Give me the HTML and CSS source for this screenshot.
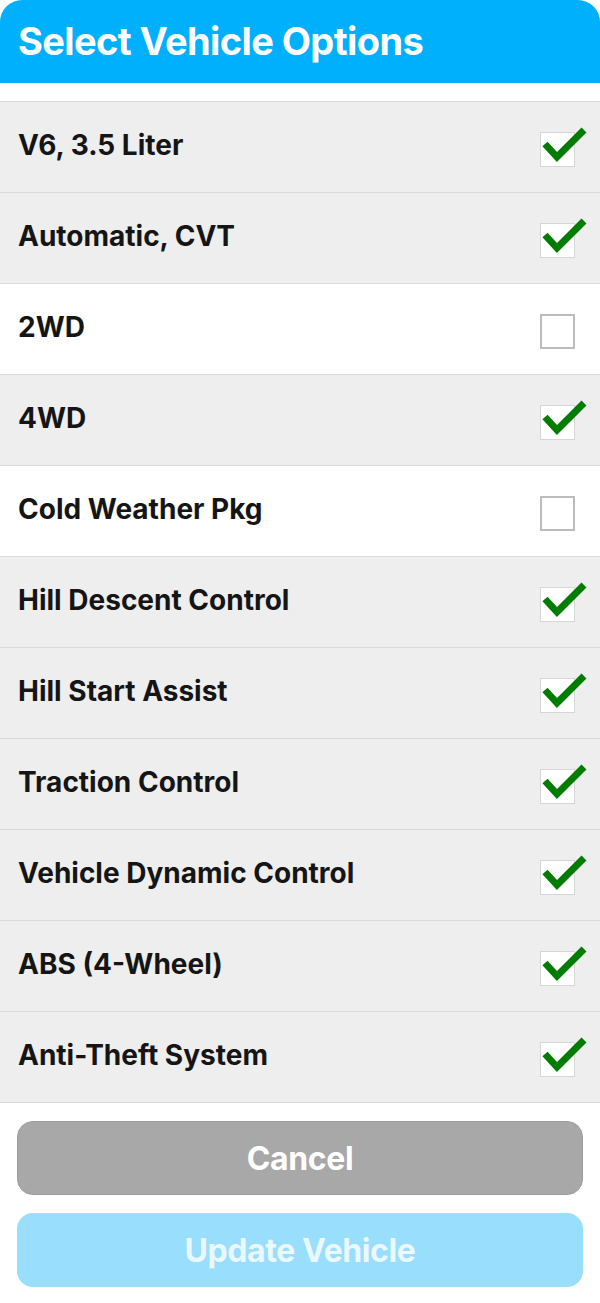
FILE: index.html
```html
<!DOCTYPE html>
<html lang="en">
<head>
    <meta charset="UTF-8">
    <meta name="viewport" content="width=device-width, initial-scale=1.0">
    <title>Select Vehicle Options</title>
    <link rel="stylesheet" href="styles.css">
</head>
<body>
    <div class="sheet">
        <div class="sheet-title">Select Vehicle Options</div>
        <div class="options">
            <div class="option checked"><span>V6, 3.5 Liter</span><div class="box"><svg class="tick" viewBox="0 0 46 34"><polyline points="3,17 15,30 42,3"/></svg></div></div>
            <div class="option checked"><span>Automatic, CVT</span><div class="box"><svg class="tick" viewBox="0 0 46 34"><polyline points="3,17 15,30 42,3"/></svg></div></div>
            <div class="option"><span>2WD</span><div class="box empty"></div></div>
            <div class="option checked"><span>4WD</span><div class="box"><svg class="tick" viewBox="0 0 46 34"><polyline points="3,17 15,30 42,3"/></svg></div></div>
            <div class="option"><span>Cold Weather Pkg</span><div class="box empty"></div></div>
            <div class="option checked"><span>Hill Descent Control</span><div class="box"><svg class="tick" viewBox="0 0 46 34"><polyline points="3,17 15,30 42,3"/></svg></div></div>
            <div class="option checked"><span>Hill Start Assist</span><div class="box"><svg class="tick" viewBox="0 0 46 34"><polyline points="3,17 15,30 42,3"/></svg></div></div>
            <div class="option checked"><span>Traction Control</span><div class="box"><svg class="tick" viewBox="0 0 46 34"><polyline points="3,17 15,30 42,3"/></svg></div></div>
            <div class="option checked"><span>Vehicle Dynamic Control</span><div class="box"><svg class="tick" viewBox="0 0 46 34"><polyline points="3,17 15,30 42,3"/></svg></div></div>
            <div class="option checked"><span>ABS (4-Wheel)</span><div class="box"><svg class="tick" viewBox="0 0 46 34"><polyline points="3,17 15,30 42,3"/></svg></div></div>
            <div class="option checked"><span>Anti-Theft System</span><div class="box"><svg class="tick" viewBox="0 0 46 34"><polyline points="3,17 15,30 42,3"/></svg></div></div>
        </div>
        <div class="actions">
            <button class="btn btn-cancel">Cancel</button>
            <button class="btn btn-update" disabled>Update Vehicle</button>
        </div>
    </div>
</body>
</html>
```

FILE: styles.css
```css
body {
    font-family: "Inter", "Liberation Sans", sans-serif;
    background-color: #fff;
    margin: 0;
    padding: 0;
}
.sheet {
    width: 600px;
    background-color: #fff;
}
.sheet-title {
    height: 83px;
    background-color: #00b0fd;
    color: #fff;
    font-size: 38px;
    font-weight: 700;
    letter-spacing: -0.6px;
    padding-left: 18px;
    display: flex;
    align-items: center;
    padding-bottom: 2px;
    box-sizing: border-box;
    border-radius: 22px 22px 0 0;
}
.options {
    margin-top: 18px;
    border-top: 1px solid #dadada;
}
.option {
    height: 90px;
    border-bottom: 1px solid #dadada;
    background-color: #fff;
    display: flex;
    align-items: center;
    justify-content: space-between;
    padding: 0 25px 0 18px;
    font-size: 28px;
    font-weight: 700;
    color: #151515;
    letter-spacing: 0;
}
.option span {
    margin-top: -5px;
}
.option.checked {
    background-color: #eeeeee;
}
.box {
    position: relative;
    width: 35px;
    height: 35px;
    box-sizing: border-box;
    border: 1px solid #d6d6d6;
    background-color: #fff;
    margin-top: 4px;
}
.box.empty {
    border: 2px solid #bdbdbd;
}
.tick {
    position: absolute;
    left: 1px;
    top: -6px;
    width: 46px;
    height: 34px;
    overflow: visible;
}
.tick polyline {
    fill: none;
    stroke: #007d00;
    stroke-width: 7;
    stroke-linejoin: miter;
}
.actions {
    display: flex;
    flex-direction: column;
    gap: 18px;
    padding: 18px 17px 17px 17px;
}
.btn {
    height: 74px;
    border-radius: 16px;
    font-family: inherit;
    font-size: 32px;
    font-weight: 700;
    color: #fff;
    letter-spacing: -0.4px;
    border: 1px solid transparent;
}
.btn-cancel {
    background-color: #a8a8a8;
    border-color: #9c9c9c;
}
.btn-update {
    background-color: #99defc;
    color: #eaf8ff;
}
```
